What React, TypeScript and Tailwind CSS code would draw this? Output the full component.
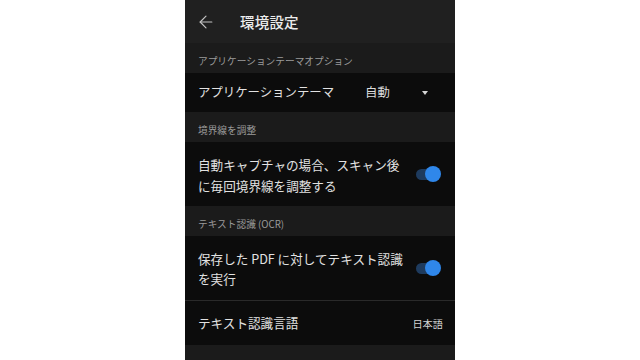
import React from "react";
import { ArrowLeft } from "lucide-react";

const font = { fontFamily: '"Noto Sans CJK JP", "Noto Sans", sans-serif' };

function SectionLabel({ children }: { children: React.ReactNode }) {
  return (
    <div className="h-[30px] flex items-center pt-[6px] px-[13px] bg-[#1b1b1b] text-[9.7px] leading-[14px] text-[#9a9a9a]">
      {children}
    </div>
  );
}

function Toggle() {
  return (
    <div className="relative w-[26px] h-[16px] flex items-center">
      <div className="w-[20px] h-[11px] rounded-full bg-[#1e3b5e] ml-[1px]" />
      <div className="absolute right-0 top-0 w-[16px] h-[16px] rounded-full bg-[#2f87ea]" />
    </div>
  );
}

export default function App() {
  return (
    <div className="w-[640px] h-[360px] bg-white flex justify-center overflow-hidden" style={font}>
      <div className="w-[270px] h-[360px] bg-[#1b1b1b] flex flex-col">
        {/* header */}
        <div className="h-[43px] shrink-0 bg-[#202020] flex items-center pl-[11px] pr-[12px]">
          <ArrowLeft className="w-[20px] h-[20px] text-[#c4c4c4]" strokeWidth={1.4} />
          <span className="ml-[24px] text-[14.5px] font-medium text-[#ececec] tracking-[0.2px]">環境設定</span>
        </div>

        <SectionLabel>アプリケーションテーマオプション</SectionLabel>
        <div className="h-[39px] shrink-0 bg-[#0c0c0c] flex items-center px-[13px] text-[12.4px] text-[#e2e2e2]">
          <span className="flex-1">アプリケーションテーマ</span>
          <span className="w-[57px] text-[#dcdcdc]">自動</span>
          <span className="w-0 h-0 border-l-[3.5px] border-r-[3.5px] border-t-[4px] border-l-transparent border-r-transparent border-t-[#d6d6d6] mr-[14px]" />
        </div>

        <SectionLabel>境界線を調整</SectionLabel>
        <div className="h-[64px] shrink-0 bg-[#0c0c0c] flex items-center pl-[13px] pr-[14px]">
          <div className="flex-1 text-[12.6px] leading-[21px] pt-[1px] text-[#e2e2e2]">
            自動キャプチャの場合、スキャン後
            <br />
            に毎回境界線を調整する
          </div>
          <Toggle />
        </div>

        <SectionLabel>テキスト認識 (OCR)</SectionLabel>
        <div className="h-[65px] shrink-0 bg-[#0c0c0c] flex items-center pl-[13px] pr-[14px] border-b border-[#2a2a2a]">
          <div className="flex-1 text-[12.6px] leading-[20px] pt-[2px] text-[#e2e2e2]">
            保存した PDF に対してテキスト認識
            <br />
            を実行
          </div>
          <Toggle />
        </div>
        <div className="h-[44px] shrink-0 bg-[#0c0c0c] flex items-center pl-[13px] pr-[12px] pt-[1px]">
          <span className="flex-1 text-[12.6px] text-[#e2e2e2]">テキスト認識言語</span>
          <span className="text-[10.2px] text-[#d4d4d4]">日本語</span>
        </div>
        <div className="flex-1 bg-[#1b1b1b]" />
      </div>
    </div>
  );
}
